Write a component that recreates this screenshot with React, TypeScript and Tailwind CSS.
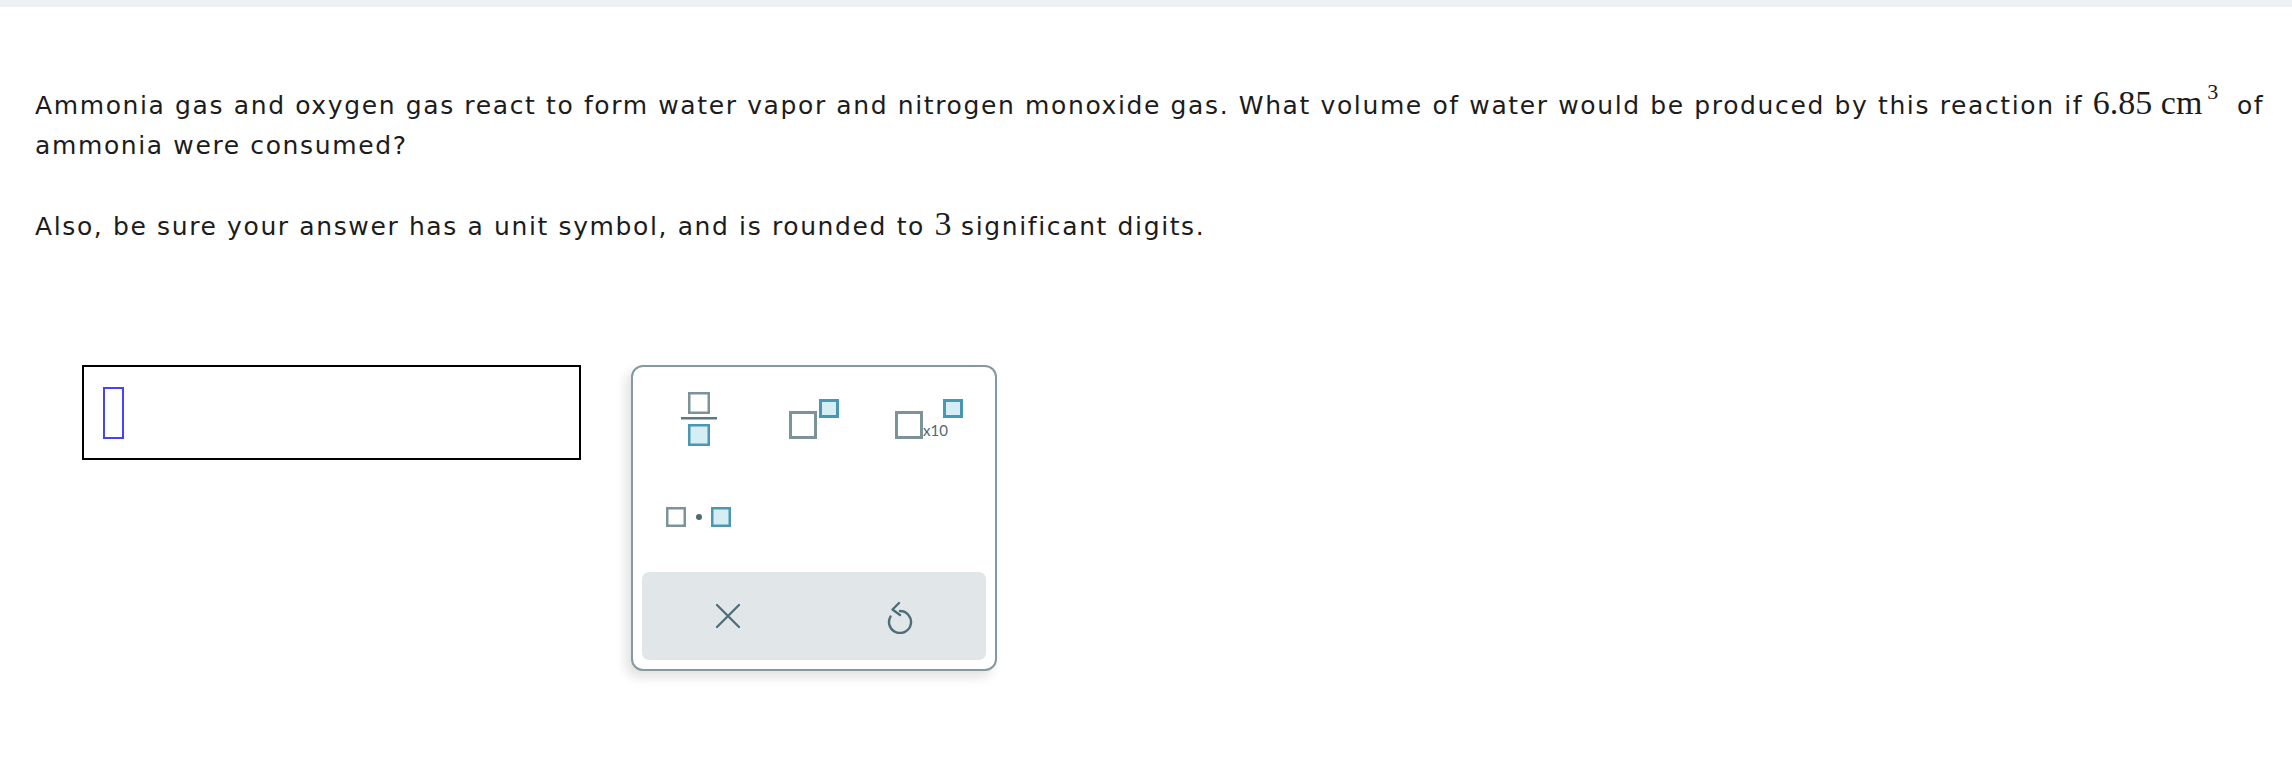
import React from 'react';

const sans = "font-['DejaVu_Sans',Verdana,sans-serif]";
const serif = "font-['Liberation_Serif','Times_New_Roman',serif]";

function FractionIcon() {
  return (
    <svg width="36" height="56" viewBox="0 0 36 56" fill="none">
      <rect x="8.25" y="2.25" width="19.5" height="19.5" stroke="#7d939a" strokeWidth="2.5" fill="#fff" />
      <rect x="0" y="26" width="36" height="2.5" fill="#5f7880" />
      <rect x="8.25" y="34.25" width="19.5" height="19.5" stroke="#4a97b1" strokeWidth="2.5" fill="#d5eef4" />
    </svg>
  );
}

function SuperscriptIcon() {
  return (
    <svg width="52" height="42" viewBox="0 0 52 42" fill="none">
      <rect x="2.5" y="14.5" width="25" height="25" stroke="#7d939a" strokeWidth="3" fill="#fff" />
      <rect x="32.5" y="2.5" width="17" height="16" stroke="#4a97b1" strokeWidth="3" fill="#d5eef4" />
    </svg>
  );
}

function TimesTenIcon() {
  return (
    <svg width="70" height="42" viewBox="0 0 70 42" fill="none">
      <rect x="2.5" y="14.5" width="25" height="25" stroke="#7d939a" strokeWidth="3" fill="#fff" />
      <text x="29" y="38" fontSize="15" fill="#4f6a74" fontFamily="Lato, 'Open Sans', sans-serif">
        x10
      </text>
      <rect x="50.5" y="2.5" width="17" height="16" stroke="#4a97b1" strokeWidth="3" fill="#d5eef4" />
    </svg>
  );
}

function DotIcon() {
  return (
    <svg width="68" height="22" viewBox="0 0 68 22" fill="none">
      <rect x="2.25" y="2.25" width="17.5" height="17.5" stroke="#7d939a" strokeWidth="2.5" fill="#fff" />
      <circle cx="34" cy="11" r="3" fill="#4f6a74" />
      <rect x="47.25" y="2.25" width="17.5" height="17.5" stroke="#4a97b1" strokeWidth="2.5" fill="#d5eef4" />
    </svg>
  );
}

function CloseIcon() {
  return (
    <svg width="26" height="26" viewBox="0 0 26 26" fill="none" stroke="#4d6d79" strokeWidth="2.3" strokeLinecap="round">
      <path d="M2 2L24 24M24 2L2 24" />
    </svg>
  );
}

function UndoIcon() {
  return (
    <svg width="28" height="36" viewBox="0 0 28 36" fill="none" stroke="#4d6d79" strokeWidth="2.4" strokeLinecap="round" strokeLinejoin="round">
      <path d="M14 13 A11 11 0 1 1 4.5 18.5" />
      <path d="M13 5 L6.5 11.5 L14 17" />
    </svg>
  );
}

export default function App() {
  return (
    <div className={`min-h-screen bg-white text-[#1c1c1c] ${sans}`}>
      <div className="h-[7px] bg-[#eff0f2]" />

      <div className="pl-[35px] pt-[79px] text-[25px] leading-[40px] tracking-[1.62px]">
        <p className="whitespace-nowrap">
          Ammonia gas and oxygen gas react to form water vapor and nitrogen monoxide gas. What volume of water would be
          produced by this reaction if{' '}
          <span className={`${serif} text-[34px] leading-[0] tracking-normal`}>
            6.85 cm<span className="text-[22px] leading-[0] align-[15px] ml-[5px] mr-[9px]">3</span>
          </span>{' '}
          of
          <br />
          ammonia were consumed?
        </p>
        <p className="mt-[41px]">
          Also, be sure your answer has a unit symbol, and is rounded to{' '}
          <span className={`${serif} text-[34px] leading-[0] tracking-normal`}>3</span> significant digits.
        </p>
      </div>

      <div className="flex items-start pl-[82px] pt-[118px]">
        <div className="w-[499px] h-[95px] border-2 border-black bg-white pl-[19px] pt-[20px]">
          <div className="w-[21px] h-[52px] border-2 border-[#4343f7]" />
        </div>

        <div className="ml-[50px] w-[366px] h-[306px] rounded-[12px] border-2 border-[#8599a1] bg-white px-[9px] pt-[12px] shadow-[-5px_6px_12px_rgba(0,0,0,0.12)]">
          <div className="grid grid-cols-3 grid-rows-[80px_80px] gap-y-[18px]">
            <button className="flex items-center justify-center">
              <FractionIcon />
            </button>
            <button className="flex items-center justify-center">
              <SuperscriptIcon />
            </button>
            <button className="flex items-center justify-center">
              <TimesTenIcon />
            </button>
            <button className="flex items-center justify-center">
              <DotIcon />
            </button>
          </div>
          <div className="mt-[15px] h-[88px] rounded-[7px] bg-[#e1e6e9] grid grid-cols-2">
            <button className="flex items-center justify-center">
              <CloseIcon />
            </button>
            <button className="flex items-center justify-center">
              <UndoIcon />
            </button>
          </div>
        </div>
      </div>
    </div>
  );
}
